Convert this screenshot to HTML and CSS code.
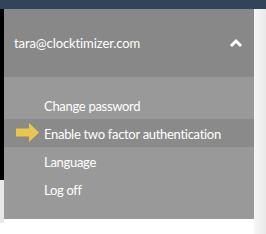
FILE: index.html
```html
<!DOCTYPE html>
<html>
<head>
<meta charset="utf-8">
<link rel="stylesheet" href="styles.css">
</head>
<body>
<div class="topbar"></div>
<div class="stage">
  <div class="side">
    <div class="side-dark"></div>
    <div class="side-light"></div>
  </div>
  <div class="panel">
    <div class="header">
      <span class="email">tara@clocktimizer.com</span>
      <svg class="chev" width="14" height="10" viewBox="0 0 14 10"><path d="M2 8 L7 3 L12 8" fill="none" stroke="#fff" stroke-width="3"/></svg>
    </div>
    <ul class="menu">
      <li class="item">Change password</li>
      <li class="item active">
        <svg class="arrow" width="24" height="20" viewBox="0 0 24 20"><path d="M0 5.5 H13 V0 L23 9.5 L13 19 V13.5 H0 Z" fill="#e9c64c"/></svg>
        Enable two factor authentication
      </li>
      <li class="item">Language</li>
      <li class="item">Log off</li>
    </ul>
  </div>
  <div class="shadow"></div>
</div>
</body>
</html>
```
FILE: styles.css
```css
html, body { margin: 0; padding: 0; background: #fff; }
body { width: 266px; height: 234px; overflow: hidden; font-family: "Lato", "Open Sans", sans-serif; }
.topbar { height: 9px; background: #33435a; }
.stage { display: flex; align-items: flex-start; }
.side { width: 4px; display: flex; flex-direction: column; }
.side-dark { height: 171px; background: #000; }
.side-light { height: 43px; background: #e6e8ea; }
.panel { width: 250px; }
.header { height: 68px; background: #888; display: flex; align-items: center; justify-content: space-between; padding: 0 10px 1px 10px; box-sizing: border-box; }
.email { color: #fff; font-size: 13px; letter-spacing: -0.1px; }
.chev { display: block; margin-right: 1px; }
.menu { list-style: none; margin: 0; padding: 14px 0 16px 0; background: #999; }
.item { position: relative; box-sizing: border-box; height: 28px; line-height: 26px; padding: 2px 0 0 40px; color: #fff; font-size: 13px; letter-spacing: -0.3px; }
.item.active { background: #8a8a8a; }
.arrow { position: absolute; left: 12px; top: 4px; }
.shadow { width: 12px; height: 225px; background: linear-gradient(to right, #f6f6f6, #e9e9e9); }
```
